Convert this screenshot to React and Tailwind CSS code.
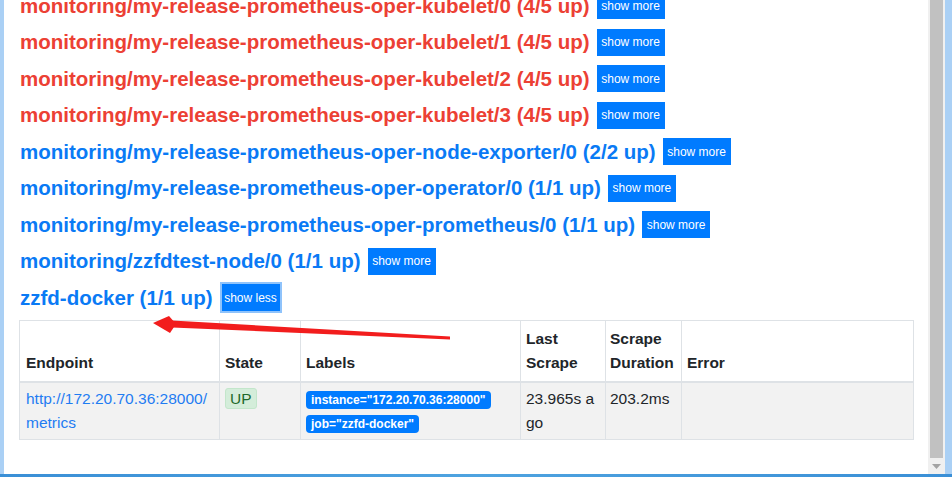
import React from 'react';

const jobs = [
  { name: 'monitoring/my-release-prometheus-oper-kubelet/0 (4/5 up)', bad: true },
  { name: 'monitoring/my-release-prometheus-oper-kubelet/1 (4/5 up)', bad: true },
  { name: 'monitoring/my-release-prometheus-oper-kubelet/2 (4/5 up)', bad: true },
  { name: 'monitoring/my-release-prometheus-oper-kubelet/3 (4/5 up)', bad: true },
  { name: 'monitoring/my-release-prometheus-oper-node-exporter/0 (2/2 up)' },
  { name: 'monitoring/my-release-prometheus-oper-operator/0 (1/1 up)' },
  { name: 'monitoring/my-release-prometheus-oper-prometheus/0 (1/1 up)' },
  { name: 'monitoring/zzfdtest-node/0 (1/1 up)' },
];

const JobRow = ({ name, bad }) => (
  <div className="h-[36.5px] flex items-center gap-[7px] pl-[1px]">
    <h2 className={`text-[20.5px] font-bold leading-none ${bad ? 'text-[#ec4034]' : 'text-[#0a7af5]'}`}>
      {name}
    </h2>
    <button className="h-[27px] w-[68px] bg-[#007bff] text-white text-[12px] flex items-center justify-center">
      show more
    </button>
  </div>
);

const Arrow = () => (
  <svg className="absolute left-0 top-0 pointer-events-none" width="952" height="477">
    <polygon points="172,320.5 450,336.6 450,339.4 172,327.5" fill="#f21d1d" />
    <polygon points="153,323 169,316 176,324 170,333" fill="#f21d1d" />
  </svg>
);

export default function App() {
  return (
    <div
      className="relative w-[952px] h-[477px] overflow-hidden flex flex-col bg-[#aad0f5]"
      style={{ fontFamily: '"Liberation Sans", Arial, sans-serif' }}
    >
      <div className="flex flex-1 min-h-0 pl-[4px]">
        <div className="flex-1 bg-white overflow-hidden">
          <div className="pl-[15px] mt-[-12.5px]">
            {jobs.map((j) => (
              <JobRow key={j.name} {...j} />
            ))}

            {/* expanded job */}
            <div className="h-[36.5px] flex items-center gap-[7px] pl-[1px]">
              <h2 className="text-[20.5px] font-bold leading-none text-[#0a7af5]">zzfd-docker (1/1 up)</h2>
              <div className="p-[2px] bg-[#8fc3fb]">
                <button className="h-[27px] w-[58px] bg-[#007bff] text-white text-[12px] flex items-center justify-center">
                  show less
                </button>
              </div>
            </div>

            <table className="mt-[4px] w-[894px] table-fixed border-collapse border border-[#dee2e6] text-[15.5px] text-[#212529]">
              <colgroup>
                <col className="w-[200px]" />
                <col className="w-[81px]" />
                <col className="w-[220px]" />
                <col className="w-[85px]" />
                <col className="w-[76px]" />
                <col className="w-[232px]" />
              </colgroup>
              <thead>
                <tr className="align-bottom text-left font-bold leading-[24px]">
                  <th className="border border-[#dee2e6] border-b-2 px-[6px] py-[6px]">Endpoint</th>
                  <th className="border border-[#dee2e6] border-b-2 px-[5px] py-[6px]">State</th>
                  <th className="border border-[#dee2e6] border-b-2 px-[5px] py-[6px]">Labels</th>
                  <th className="border border-[#dee2e6] border-b-2 px-[5px] py-[6px]">Last Scrape</th>
                  <th className="border border-[#dee2e6] border-b-2 px-[4px] py-[6px]">Scrape Duration</th>
                  <th className="border border-[#dee2e6] border-b-2 px-[5px] py-[6px]">Error</th>
                </tr>
              </thead>
              <tbody>
                <tr className="align-top bg-[#f2f2f2] leading-[24px]">
                  <td className="border border-[#dee2e6] px-[6px] py-[4px] break-all">
                    <a className="text-[#1f7cf2]">http://172.20.70.36:28000/metrics</a>
                  </td>
                  <td className="border border-[#dee2e6] px-[5px] py-[4px]">
                    <span className="inline-flex items-center h-[21px] px-[4px] rounded-[3px] border border-[#c3e6cb] bg-[#d4edda] text-[#1f6a2c] leading-none">
                      UP
                    </span>
                  </td>
                  <td className="border border-[#dee2e6] px-[5px] py-[4px]">
                    <div className="flex flex-col items-start gap-[6px] pt-[4px]">
                      <span className="h-[18px] px-[5px] rounded-[4px] bg-[#007bff] text-white text-[12px] font-bold flex items-center leading-none">
                        instance="172.20.70.36:28000"
                      </span>
                      <span className="h-[18px] px-[5px] rounded-[4px] bg-[#007bff] text-white text-[12px] font-bold flex items-center leading-none">
                        job="zzfd-docker"
                      </span>
                    </div>
                  </td>
                  <td className="border border-[#dee2e6] px-[5px] py-[4px] break-all">23.965s ago</td>
                  <td className="border border-[#dee2e6] px-[4px] py-[4px]">203.2ms</td>
                  <td className="border border-[#dee2e6] px-[5px] py-[4px]"></td>
                </tr>
              </tbody>
            </table>
          </div>
        </div>

        {/* scrollbar */}
        <div className="w-[17px] bg-[#f0f0f0] flex flex-col items-center">
          <div className="w-[13px] h-[458px] bg-[#c1c1c1]" />
          <div className="flex-1 flex items-center justify-center">
            <svg width="9" height="5" viewBox="0 0 9 5">
              <polygon points="0,0 9,0 4.5,5" fill="#a3a3a3" />
            </svg>
          </div>
        </div>
        <div className="w-[7px]" />
      </div>
      <div className="h-[3px] bg-gradient-to-r from-[#3a8fd6] via-[#4ea3e0] to-[#3a8fd6]" />
      <Arrow />
    </div>
  );
}
